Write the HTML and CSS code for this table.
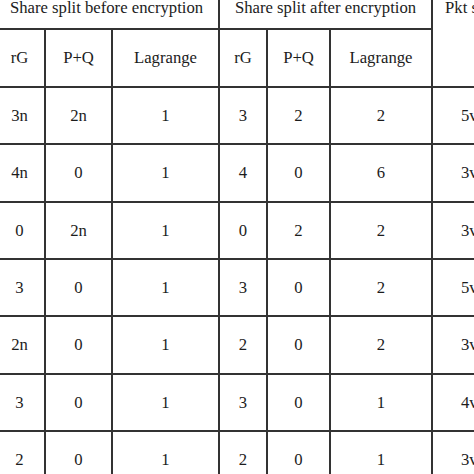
FILE: index.html
```html
<!DOCTYPE html>
<html>
<head>
<meta charset="utf-8">
<link rel="stylesheet" href="styles.css">
</head>
<body>
<div class="frame">
<table class="grid">
<colgroup>
<col class="c1"><col class="c2"><col class="c3"><col class="c4"><col class="c5"><col class="c6"><col class="c7">
</colgroup>
<tr class="h1">
<td colspan="3">Share split before encryption</td>
<td colspan="3">Share split after encryption</td>
<td rowspan="2" class="pkt">Pkt size</td>
</tr>
<tr class="h2">
<td>rG</td><td>P+Q</td><td>Lagrange</td><td>rG</td><td>P+Q</td><td>Lagrange</td>
</tr>
<tr class="ra"><td>3n</td><td>2n</td><td>1</td><td>3</td><td>2</td><td>2</td><td class="last">5v</td></tr>
<tr class="rb"><td>4n</td><td>0</td><td>1</td><td>4</td><td>0</td><td>6</td><td class="last">3v</td></tr>
<tr class="ra"><td>0</td><td>2n</td><td>1</td><td>0</td><td>2</td><td>2</td><td class="last">3v</td></tr>
<tr class="ra"><td>3</td><td>0</td><td>1</td><td>3</td><td>0</td><td>2</td><td class="last">5v</td></tr>
<tr class="rb"><td>2n</td><td>0</td><td>1</td><td>2</td><td>0</td><td>2</td><td class="last">3v</td></tr>
<tr class="ra"><td>3</td><td>0</td><td>1</td><td>3</td><td>0</td><td>1</td><td class="last">4v</td></tr>
<tr class="ra"><td>2</td><td>0</td><td>1</td><td>2</td><td>0</td><td>1</td><td class="last">3v</td></tr>
</table>
</div>
</body>
</html>
```
FILE: styles.css
```css
html, body {
  margin: 0;
  padding: 0;
  background: #fff;
  overflow: hidden;
  width: 474px;
  height: 474px;
}
.frame {
  margin-left: -7px;
  margin-top: -14px;
}
.grid {
  border-collapse: collapse;
  table-layout: fixed;
  width: 598px;
  font-family: "Liberation Serif", "Times New Roman", serif;
  font-size: 16.7px;
  color: #1c1c1c;
}
.c1 { width: 51px; }
.c2 { width: 67px; }
.c3 { width: 107px; }
.c4 { width: 48px; }
.c5 { width: 63px; }
.c6 { width: 102px; }
.c7 { width: 160px; }
.grid td {
  border: 2px solid #333;
  text-align: center;
  vertical-align: middle;
  padding: 0;
  white-space: nowrap;
  overflow: hidden;
}
.h1 { height: 42px; }
.h2 { height: 58px; }
.ra { height: 57px; }
.rb { height: 58px; }
.grid td.pkt {
  text-align: left;
  vertical-align: top;
  padding-left: 12px;
  padding-top: 10px;
}
.grid td.last {
  text-align: left;
  padding-left: 28px;
}
```
